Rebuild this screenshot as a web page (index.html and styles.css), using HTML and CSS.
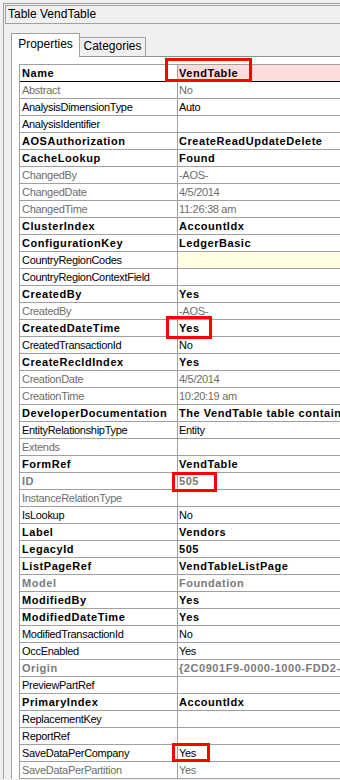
FILE: index.html
```html
<!DOCTYPE html>
<html lang="en">
<head>
    <meta charset="UTF-8">
    <meta name="viewport" content="width=device-width, initial-scale=1.0">
    <title>Table VendTable</title>
    <link rel="stylesheet" href="styles.css">
</head>
<body>

    <div class="window">
        <div class="caption">Table VendTable</div>

        <!-- Tabs -->
        <div class="tabs">
            <div class="tab active">Properties</div>
            <div class="tab">Categories</div>
        </div>

        <!-- Property sheet -->
        <div class="tab-page">
            <div class="grid">
                <div class="row header bold"><div class="key">Name</div><div class="val pink">VendTable</div></div>
                <div class="row grey"><div class="key">Abstract</div><div class="val">No</div></div>
                <div class="row"><div class="key">AnalysisDimensionType</div><div class="val">Auto</div></div>
                <div class="row"><div class="key">AnalysisIdentifier</div><div class="val"></div></div>
                <div class="row bold"><div class="key">AOSAuthorization</div><div class="val">CreateReadUpdateDelete</div></div>
                <div class="row bold"><div class="key">CacheLookup</div><div class="val">Found</div></div>
                <div class="row grey"><div class="key">ChangedBy</div><div class="val">-AOS-</div></div>
                <div class="row grey"><div class="key">ChangedDate</div><div class="val">4/5/2014</div></div>
                <div class="row grey"><div class="key">ChangedTime</div><div class="val">11:26:38 am</div></div>
                <div class="row bold"><div class="key">ClusterIndex</div><div class="val">AccountIdx</div></div>
                <div class="row bold"><div class="key">ConfigurationKey</div><div class="val">LedgerBasic</div></div>
                <div class="row"><div class="key">CountryRegionCodes</div><div class="val yellow"></div></div>
                <div class="row"><div class="key">CountryRegionContextField</div><div class="val"></div></div>
                <div class="row bold"><div class="key">CreatedBy</div><div class="val">Yes</div></div>
                <div class="row grey"><div class="key">CreatedBy</div><div class="val">-AOS-</div></div>
                <div class="row bold"><div class="key">CreatedDateTime</div><div class="val">Yes</div></div>
                <div class="row"><div class="key">CreatedTransactionId</div><div class="val">No</div></div>
                <div class="row bold"><div class="key">CreateRecIdIndex</div><div class="val">Yes</div></div>
                <div class="row grey"><div class="key">CreationDate</div><div class="val">4/5/2014</div></div>
                <div class="row grey"><div class="key">CreationTime</div><div class="val">10:20:19 am</div></div>
                <div class="row bold"><div class="key">DeveloperDocumentation</div><div class="val">The VendTable table contains information about vendors</div></div>
                <div class="row"><div class="key">EntityRelationshipType</div><div class="val">Entity</div></div>
                <div class="row grey"><div class="key">Extends</div><div class="val"></div></div>
                <div class="row bold"><div class="key">FormRef</div><div class="val">VendTable</div></div>
                <div class="row grey bold"><div class="key">ID</div><div class="val">505</div></div>
                <div class="row grey"><div class="key">InstanceRelationType</div><div class="val"></div></div>
                <div class="row"><div class="key">IsLookup</div><div class="val">No</div></div>
                <div class="row bold"><div class="key">Label</div><div class="val">Vendors</div></div>
                <div class="row bold"><div class="key">LegacyId</div><div class="val">505</div></div>
                <div class="row bold"><div class="key">ListPageRef</div><div class="val">VendTableListPage</div></div>
                <div class="row grey bold"><div class="key">Model</div><div class="val">Foundation</div></div>
                <div class="row bold"><div class="key">ModifiedBy</div><div class="val">Yes</div></div>
                <div class="row bold"><div class="key">ModifiedDateTime</div><div class="val">Yes</div></div>
                <div class="row"><div class="key">ModifiedTransactionId</div><div class="val">No</div></div>
                <div class="row"><div class="key">OccEnabled</div><div class="val">Yes</div></div>
                <div class="row grey bold"><div class="key">Origin</div><div class="val">{2C0901F9-0000-1000-FDD2-D1C86E79C7F1}</div></div>
                <div class="row"><div class="key">PreviewPartRef</div><div class="val"></div></div>
                <div class="row bold"><div class="key">PrimaryIndex</div><div class="val">AccountIdx</div></div>
                <div class="row"><div class="key">ReplacementKey</div><div class="val"></div></div>
                <div class="row"><div class="key">ReportRef</div><div class="val"></div></div>
                <div class="row"><div class="key">SaveDataPerCompany</div><div class="val">Yes</div></div>
                <div class="row grey"><div class="key">SaveDataPerPartition</div><div class="val">Yes</div></div>
            </div>
        </div>
    </div>

    <!-- Red annotation boxes drawn over the sheet -->
    <div class="mark mark-name"></div>
    <div class="mark mark-created"></div>
    <div class="mark mark-id"></div>
    <div class="mark mark-company"></div>

</body>
</html>
```

FILE: styles.css
```css
/* Dynamics AX style property sheet */
body {
    margin: 0;
    height: 780px;
    overflow: hidden;
    background-color: #f0f0f0;
    font-family: "Liberation Sans", Arial, sans-serif;
    color: #000;
}

.window {
    margin: 3px 0 0 3px;
    padding: 1px 0 0 1px;
    border-top: 1px solid #a0a0a0;
    border-left: 1px solid #a0a0a0;
}

.caption {
    height: 17px;
    line-height: 17px;
    padding-left: 2px;
    font-size: 12px;
    border-top: 1px solid #a0a0a0;
    border-left: 1px solid #a0a0a0;
    border-bottom: 1px solid #a0a0a0;
}

/* Tab strip */
.tabs {
    display: flex;
    align-items: flex-end;
    padding-top: 9px;
    margin-left: 6px;
    font-size: 12px;
}

.tab {
    width: 65px;
    height: 18px;
    line-height: 17px;
    text-align: center;
    border-top: 1px solid #a0a0a0;
    border-right: 1px solid #a0a0a0;
    background-color: #f0f0f0;
}

.tab.active {
    position: relative;
    z-index: 1;
    width: 67px;
    height: 21px;
    padding-top: 2px;
    margin-bottom: -1px;
    border-left: 1px solid #a0a0a0;
    background-color: #fff;
}

.tab-page {
    margin-left: 6px;
    padding: 7px 0 0 7px;
    border-top: 1px solid #8e8f8f;
    border-left: 1px solid #a0a0a0;
    background-color: #fff;
}

/* Property grid */
.grid {
    border-top: 1px solid #a0a0a0;
    border-left: 1px solid #a0a0a0;
    font-size: 11px;
    letter-spacing: -0.3px;
}

.row {
    display: flex;
    height: 16px;
    line-height: 16px;
    border-bottom: 1px solid #a0a0a0;
    white-space: nowrap;
}

.row.header {
    border-bottom-color: #000;
}

.key {
    width: 155px;
    padding-left: 2px;
    border-right: 1px solid #a0a0a0;
    overflow: hidden;
}

.val {
    flex: 1;
    padding-left: 1px;
    overflow: hidden;
}

.bold {
    font-weight: bold;
    letter-spacing: 0.55px;
}

.grey {
    color: #6d6d6d;
}

.grey.bold {
    color: #7a7a7a;
}

.pink {
    background-color: #ffdcdc;
}

.yellow {
    background-color: #fffee3;
}

/* Annotation boxes */
.mark {
    position: absolute;
    box-sizing: border-box;
    border: 3px solid #f00;
}

.mark-name {
    left: 165px;
    top: 58px;
    width: 87px;
    height: 24px;
}

.mark-created {
    left: 166px;
    top: 316px;
    width: 46px;
    height: 23px;
}

.mark-id {
    left: 172px;
    top: 472px;
    width: 45px;
    height: 20px;
}

.mark-company {
    left: 172px;
    top: 743px;
    width: 38px;
    height: 19px;
}
```
